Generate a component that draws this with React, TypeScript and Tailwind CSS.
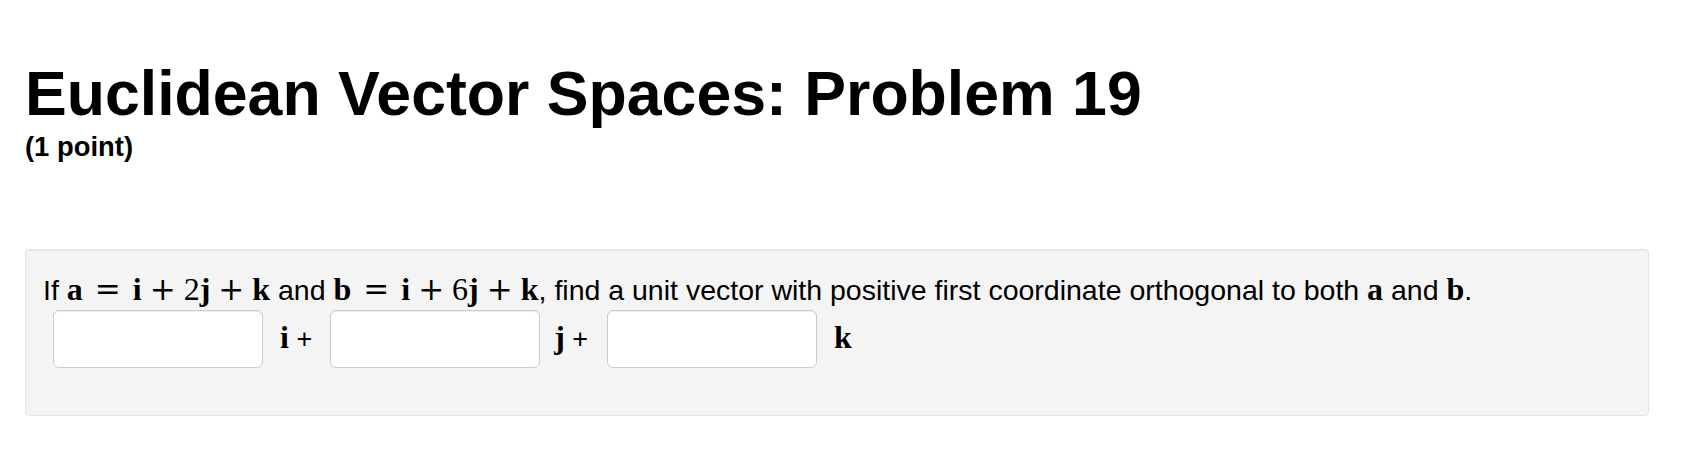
import React from "react";

const sans = { fontFamily: '"Liberation Sans", Arial, sans-serif' };

function B({ children }: { children: React.ReactNode }) {
  return (
    <span className="font-bold text-[32px] leading-none" style={{ fontFamily: '"Liberation Serif", serif' }}>
      {children}
    </span>
  );
}

function N({ children }: { children: React.ReactNode }) {
  return (
    <span className="text-[32px] leading-none" style={{ fontFamily: '"Liberation Serif", serif' }}>
      {children}
    </span>
  );
}

function Op({ children, wide }: { children: React.ReactNode; wide?: boolean }) {
  return (
    <span
      className={`text-[31px] leading-none ${wide ? "mx-[12px]" : "mx-[8px]"}`}
      style={{ fontFamily: '"DejaVu Serif", serif' }}
    >
      {children}
    </span>
  );
}

function AnswerBox() {
  return (
    <input
      type="text"
      className="h-[58px] w-[210px] rounded-[6px] border border-[#cccccc] bg-white shadow-[inset_0_1px_1px_rgba(0,0,0,0.075)] outline-none"
    />
  );
}

export default function App() {
  return (
    <div className="bg-white pl-[25px] pr-[44px] pb-[40px] text-black" style={sans}>
      <h1 className="pt-[62px] text-[62.6px] font-bold leading-[62px]">
        Euclidean Vector Spaces: Problem 19
      </h1>
      <div className="mt-[10px] text-[27.4px] font-bold leading-[26px]">(1 point)</div>

      <div className="mt-[89px] rounded-[4px] border border-[#e3e3e3] bg-[#f4f4f4] pl-[17px] pb-[47px] pt-[22px] shadow-[inset_0_1px_1px_rgba(0,0,0,0.05)]">
        <div className="text-[28.5px] leading-[36px] whitespace-nowrap">
          If <B>a</B>
          <Op wide>=</Op>
          <B>i</B>
          <Op>+</Op>
          <N>2</N>
          <B>j</B>
          <Op>+</Op>
          <B>k</B> and <B>b</B>
          <Op wide>=</Op>
          <B>i</B>
          <Op>+</Op>
          <N>6</N>
          <B>j</B>
          <Op>+</Op>
          <B>k</B>, find a unit vector with positive first coordinate orthogonal to both <B>a</B> and <B>b</B>.
        </div>
        <div className="mt-[2px] ml-[10px] flex items-center text-[27px]">
          <AnswerBox />
          <span className="ml-[17px] mr-[18px]">
            <B>i</B> +
          </span>
          <AnswerBox />
          <span className="ml-[14px] mr-[19px]">
            <B>j</B> +
          </span>
          <AnswerBox />
          <span className="ml-[17px]">
            <B>k</B>
          </span>
        </div>
      </div>
    </div>
  );
}
